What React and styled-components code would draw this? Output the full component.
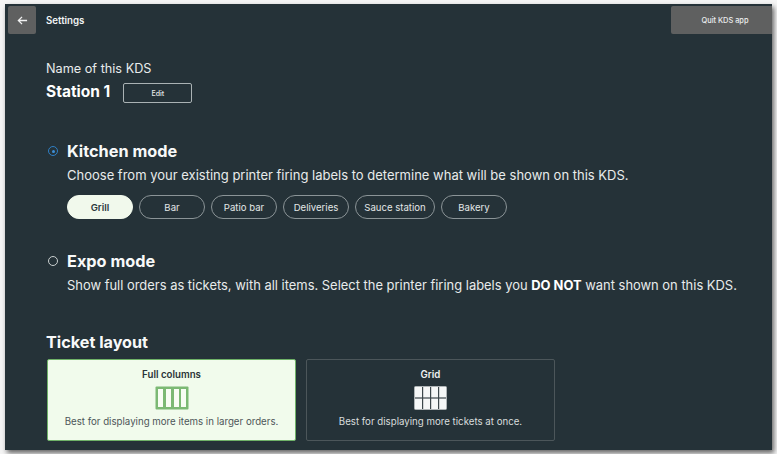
import React from 'react';
import styled, { createGlobalStyle } from 'styled-components';

const Global = createGlobalStyle`
  html, body { margin: 0; padding: 0; background: #f4f4f4; overflow: hidden; }
  body { font-family: Inter, "Noto Sans", sans-serif; }
`;
const Stage = styled.div`
  width: 777px; height: 454px; padding: 4px 5px 4px 5px; box-sizing: border-box;
  background: #f5f5f5;
`;
const Screen = styled.main`
  width: 767px; height: 446px; background: #253238; color: #fff; overflow: hidden;
  box-shadow: 2px 3px 5px rgba(0,0,0,.6);
  display: flex; flex-direction: column;
`;
const TopBar = styled.header`
  display: flex; align-items: flex-start; justify-content: space-between;
  height: 30px; padding: 2px 0 0 3px; flex: none;
`;
const TopLeft = styled.div`display: flex; align-items: center; gap: 10px;`;
const BackButton = styled.button`
  width: 28px; height: 28px; padding: 0; border: 0; border-radius: 2px; background: #5f6060; color: #f2f2f2;
  display: flex; align-items: center; justify-content: center;
`;
const Title = styled.span`font-size: 9.7px; font-weight: 600; color: #f2f4f4;`;
const QuitButton = styled.button`
  width: 101px; height: 28px; border: 0; border-radius: 2px 0 0 2px; background: #5f6060; color: #eceeee;
  font: 500 7.4px Inter, sans-serif; padding: 0 0 0 7px;
`;
const Content = styled.div`padding: 25px 0 0 41px; display: flex; flex-direction: column; flex: 1;`;
const NameLabel = styled.div`font-size: 12.7px; line-height: 16px; color: #e8ecec;`;
const NameRow = styled.div`display: flex; align-items: center; gap: 13px; margin-top: 5px;`;
const StationName = styled.div`font-size: 15.5px; font-weight: 700; line-height: 20px;`;
const EditButton = styled.button`
  width: 69px; height: 20px; padding: 0; background: transparent; border: 1px solid #aab2b4; border-radius: 2px;
  color: #e6e9e9; font: 500 7px Inter, sans-serif; position: relative; top: 1px;
`;
const Mode = styled.section`
  display: grid; grid-template-columns: 12px 1fr; column-gap: 9px; align-items: center;
  margin-top: ${p => p.$top}px;
`;
const Radio = styled.span`
  width: 10px; height: 10px; margin-left: 2px; box-sizing: border-box; border-radius: 50%;
  border: 1px solid ${p => p.$on ? '#2f7fc4' : '#c9cfcf'}; display: flex; align-items: center; justify-content: center;
  &::after { content: ''; width: 3px; height: 3px; border-radius: 50%; background: ${p => p.$on ? '#3d8fd6' : 'transparent'}; }
`;
const ModeTitle = styled.h2`margin: 0; font-size: 16.3px; line-height: 20px; font-weight: 700; color: #f8f9f9;`;
const ModeText = styled.p`
  grid-column: 2; margin: 5px 0 0; font-size: ${p => p.$size}px; line-height: 18px; color: #e8ebeb; white-space: nowrap;
  b { font-weight: 700; color: #fff; }
`;
const Chips = styled.div`grid-column: 2; display: flex; gap: 6px; margin-top: 11px;`;
const Chip = styled.button`
  height: 24px; padding: 0; box-sizing: border-box; border-radius: 12px; white-space: nowrap;
  width: ${p => p.$w}px;
  border: 1px solid ${p => p.$on ? '#f1f9ec' : '#8b9497'};
  background: ${p => p.$on ? '#f1f9ec' : 'transparent'}; color: ${p => p.$on ? '#2c3a3e' : '#e3e7e7'};
  font: ${p => p.$on ? 600 : 400} 9.6px Inter, sans-serif;
`;
const SectionTitle = styled.h2`margin: 38px 0 0; font-size: 16.2px; line-height: 20px; font-weight: 700; color: #f8f9f9;`;
const Cards = styled.div`display: flex; gap: 10px; margin: 7px 0 0 1px;`;
const Card = styled.div`
  width: 249px; height: 82px; box-sizing: border-box; border-radius: 2px; padding: 9px 0 0;
  border: 1px solid ${p => p.$on ? '#6fb268' : '#4c565a'};
  background: ${p => p.$on ? '#f1fbec' : 'transparent'};
  display: flex; flex-direction: column; align-items: center;
`;
const CardTitle = styled.div`font-size: 9.7px; line-height: 12px; font-weight: 600; color: ${p => p.$on ? '#2b3438' : '#f0f2f2'};`;
const CardText = styled.div`font-size: 9.7px; line-height: 12px; margin-top: 6px; color: ${p => p.$on ? '#4d5659' : '#d9dddd'};`;
const Icon = styled.svg`display: block; margin-top: 5px; flex: none;`;

const ColumnsIcon = () => (
  <Icon width="34" height="24" viewBox="0 0 34 24">
    <rect x="0.5" y="0.5" width="33" height="23" rx="1" fill="#7cb974" />
    {[3, 11, 19, 26].map(x => <rect key={x} x={x} y="3" width="5" height="18" fill="#f8fdf4" />)}
  </Icon>
);
const GridIcon = () => (
  <Icon width="33" height="24" viewBox="0 0 33 24">
    <rect x="0.5" y="0.5" width="32" height="23" rx="1" fill="#f5f7f7" stroke="#aeb4b6" />
    {[8, 16, 24].map(x => <rect key={x} x={x} y="1" width="1.2" height="22" fill="#3c474b" />)}
    <rect x="1" y="11.4" width="31" height="1.2" fill="#3c474b" />
  </Icon>
);

const chips = [['Grill', 66], ['Bar', 66], ['Patio bar', 66], ['Deliveries', 66], ['Sauce station', 80], ['Bakery', 66]];

export default function App() {
  return (
    <Stage>
      <Global />
      <Screen>
        <TopBar>
          <TopLeft>
            <BackButton aria-label="Back">
              <svg width="11" height="11" viewBox="0 0 12 12" fill="none" stroke="currentColor" strokeWidth="1.4">
                <path d="M11 6H1.5M5.5 2 1.5 6l4 4" />
              </svg>
            </BackButton>
            <Title>Settings</Title>
          </TopLeft>
          <QuitButton>Quit KDS app</QuitButton>
        </TopBar>
        <Content>
          <NameLabel>Name of this KDS</NameLabel>
          <NameRow>
            <StationName>Station 1</StationName>
            <EditButton>Edit</EditButton>
          </NameRow>
          <Mode $top={39}>
            <Radio $on />
            <ModeTitle>Kitchen mode</ModeTitle>
            <ModeText $size={13}>Choose from your existing printer firing labels to determine what will be shown on this KDS.</ModeText>
            <Chips>
              {chips.map(([c, w], i) => (
                <Chip key={c} $on={i === 0} $w={w}>{c}</Chip>
              ))}
            </Chips>
          </Mode>
          <Mode $top={32}>
            <Radio />
            <ModeTitle>Expo mode</ModeTitle>
            <ModeText $size={12.93}>Show full orders as tickets, with all items. Select the printer firing labels you <b>DO NOT</b> want shown on this KDS.</ModeText>
          </Mode>
          <SectionTitle>Ticket layout</SectionTitle>
          <Cards>
            <Card $on>
              <CardTitle $on>Full columns</CardTitle>
              <ColumnsIcon />
              <CardText $on>Best for displaying more items in larger orders.</CardText>
            </Card>
            <Card>
              <CardTitle>Grid</CardTitle>
              <GridIcon />
              <CardText>Best for displaying more tickets at once.</CardText>
            </Card>
          </Cards>
        </Content>
      </Screen>
    </Stage>
  );
}
